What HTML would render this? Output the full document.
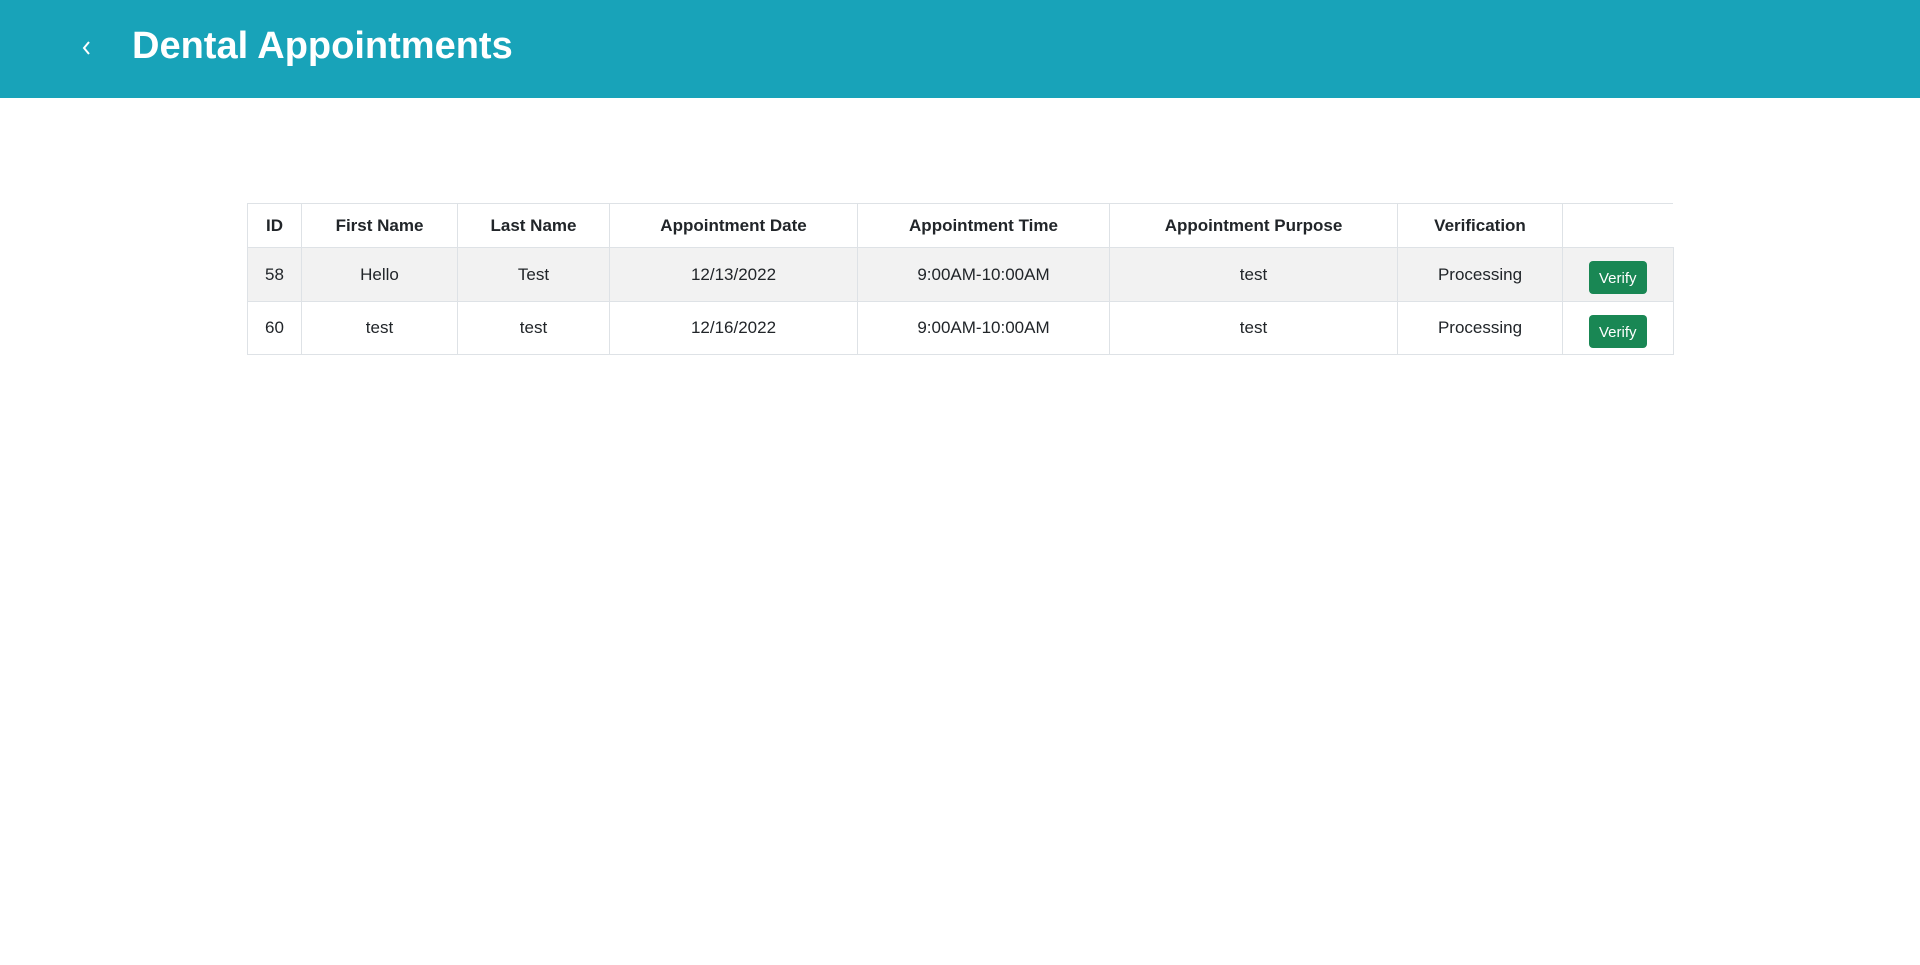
<!DOCTYPE html>
<html><head><style>
body{margin:0;width:1920px;height:965px;background:#fff;font-family:"Liberation Sans",sans-serif;color:#212529;overflow:hidden}
.hdr{height:98px;background:#18a3b9;position:relative}
.hdr .back{position:absolute;left:80px;top:33px;width:14px;height:30px}
.hdr h1{position:absolute;left:132px;top:0;margin:0;line-height:93px;font-size:38px;font-weight:bold;color:#fff}
table{position:absolute;left:247px;top:203px;border-collapse:collapse;font-size:17px}
td,th{border:1px solid #dee2e6;text-align:center;padding:0}
th{height:43px;font-weight:bold}
tr.r1 td{background:#f2f2f2;height:53px}
tr.r2 td{height:52px}
.btn{display:inline-block;background:#198754;color:#fff;border-radius:4px;width:58px;height:33px;line-height:36px;font-size:15px;margin-top:6px}
</style></head><body>
<div class="hdr">
<svg class="back" viewBox="0 0 14 30"><path d="M9 9 L4 15 L9 21" stroke="#fff" stroke-width="2" fill="none"/></svg>
<h1>Dental Appointments</h1>
</div>
<table>
<tr><th style="width:53px">ID</th><th style="width:155px">First Name</th><th style="width:151px">Last Name</th><th style="width:247px">Appointment Date</th><th style="width:251px">Appointment Time</th><th style="width:287px">Appointment Purpose</th><th style="width:164px">Verification</th><th style="width:110px;border-right:none"></th></tr>
<tr class="r1"><td>58</td><td>Hello</td><td>Test</td><td>12/13/2022</td><td>9:00AM-10:00AM</td><td>test</td><td>Processing</td><td><span class="btn">Verify</span></td></tr>
<tr class="r2"><td>60</td><td>test</td><td>test</td><td>12/16/2022</td><td>9:00AM-10:00AM</td><td>test</td><td>Processing</td><td><span class="btn">Verify</span></td></tr>
</table>
</body></html>
